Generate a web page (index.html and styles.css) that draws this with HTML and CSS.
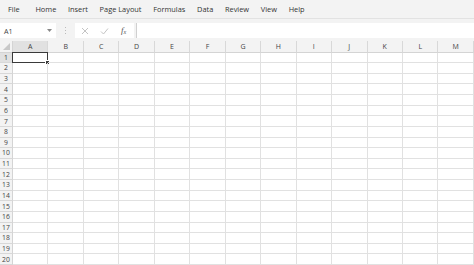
FILE: index.html
```html
<!DOCTYPE html>
<html>
<head>
<meta charset="utf-8">
<link rel="stylesheet" href="styles.css">
</head>
<body>
<div class="app">
  <nav class="menu">
    <span class="mi first">File</span>
    <span class="mi">Home</span>
    <span class="mi">Insert</span>
    <span class="mi">Page Layout</span>
    <span class="mi">Formulas</span>
    <span class="mi">Data</span>
    <span class="mi">Review</span>
    <span class="mi">View</span>
    <span class="mi">Help</span>
  </nav>
  <div class="fbar">
    <div class="namebox"><span>A1</span><svg class="caret" width="5" height="3" viewBox="0 0 5 3"><path d="M0 0h5L2.5 3z" fill="#888"/></svg></div>
    <div class="vdots"><i></i><i></i><i></i></div>
    <div class="fbtns">
      <svg class="fi" width="8" height="8" viewBox="0 0 8 8"><path d="M1 1l6 6M7 1L1 7" stroke="#c4c4c4" stroke-width="1" fill="none"/></svg>
      <svg class="fi" width="9" height="8" viewBox="0 0 9 8"><path d="M1 4.5l2.5 2.5L8 1.5" stroke="#c4c4c4" stroke-width="1" fill="none"/></svg>
      <span class="fx">f<sub>x</sub></span>
    </div>
    <div class="finput"></div>
  </div>
  <div class="sheet" id="sheet"></div>
</div>
<script>
(function(){
  var s=document.getElementById('sheet');
  var cols='ABCDEFGHIJKLM'.split('');
  var h='<div class="corner"><svg width="7" height="7" viewBox="0 0 7 7"><path d="M7 0V7H0z" fill="#c8c8c8"/></svg></div>';
  cols.forEach(function(c,i){h+='<div class="ch'+(i===0?' sel':'')+'">'+c+'</div>';});
  for(var r=1;r<=20;r++){
    h+='<div class="rh'+(r===1?' sel':'')+'">'+r+'</div>';
    for(var c=0;c<cols.length;c++){
      h+='<div class="cell">'+(r===1&&c===0?'<div class="active"><b class="handle"></b></div>':'')+'</div>';
    }
  }
  s.innerHTML=h;
})();
</script>
</body>
</html>
```
FILE: styles.css
```css
html,body{margin:0;padding:0;background:#fff;}
body{font-family:"Open Sans","Noto Sans",sans-serif;color:#333;overflow:hidden;}
.app{width:474px;height:265px;display:flex;flex-direction:column;overflow:hidden;}
.menu{height:18px;background:#f3f3f3;display:flex;align-items:center;padding-left:8px;font-size:7.4px;color:#333;border-bottom:1px solid #e2e2e2;box-shadow:0 1px 2px rgba(0,0,0,.08);}
.mi{margin-right:11.7px;}
.mi.first{margin-right:15.7px;}
.fbar{height:22px;background:#f3f3f3;display:flex;align-items:center;padding-top:2px;box-sizing:border-box;}
.namebox{width:56px;height:15px;background:#fff;display:flex;align-items:center;justify-content:space-between;padding:0 3px 0 4px;box-sizing:border-box;font-size:7.2px;color:#444;}
.caret{margin-right:1px;}
.vdots{width:19px;display:flex;flex-direction:column;align-items:center;gap:2px;}
.vdots i{width:1px;height:1px;background:#bbb;display:block;}
.fbtns{width:59px;height:15px;background:#fff;display:flex;align-items:center;padding-left:6px;box-sizing:border-box;gap:11px;}
.fx{font-family:"Liberation Serif",serif;font-style:italic;font-size:9px;color:#555;line-height:1;margin-left:1px;}
.fx sub{font-size:6px;vertical-align:-1px;}
.finput{flex:1;height:15px;background:#fff;margin-left:2px;border-left:1px solid #d0d0d0;}
.sheet{display:grid;grid-template-columns:13px repeat(13,35.46px);grid-template-rows:12px repeat(20,10.63px);font-size:7px;color:#444;}
.corner,.ch,.rh{background:#f3f3f3;display:flex;align-items:center;justify-content:center;box-sizing:border-box;}
.corner{justify-content:flex-end;align-items:flex-end;padding:0 2px 2px 0;border-right:1px solid #d4d4d4;border-bottom:1px solid #d4d4d4;}
.ch{border-right:1px solid #d8d8d8;border-bottom:1px solid #d4d4d4;font-size:7px;}
.ch.sel{background:#e1e1e1;border-bottom:1px solid #9a9a9a;}
.rh{border-right:1px solid #d4d4d4;border-bottom:1px solid #d8d8d8;font-size:6.8px;}
.rh.sel{background:#e1e1e1;border-right:1px solid #9a9a9a;}
.cell{border-right:1px solid #e1e1e1;border-bottom:1px solid #e1e1e1;box-sizing:border-box;position:relative;}
.active{position:absolute;left:-1px;top:-1px;right:-1px;bottom:-1px;border:1.5px solid #3a3a3a;}
.handle{position:absolute;right:-2.5px;bottom:-2.5px;width:3px;height:3px;background:#3a3a3a;border:0.5px solid #fff;}
```
